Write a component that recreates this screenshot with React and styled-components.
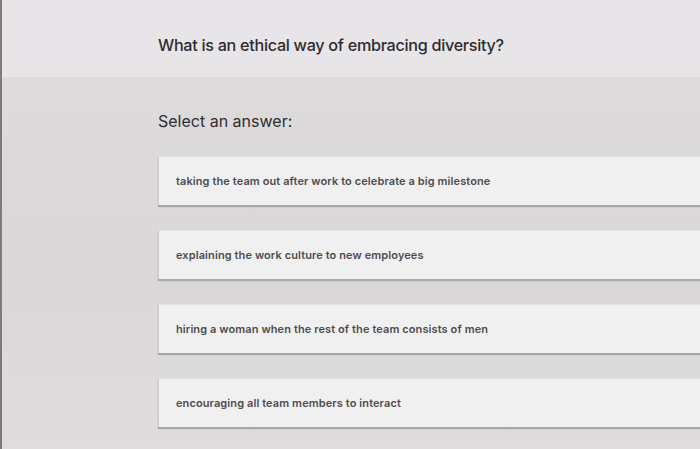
import React from 'react';
import styled, { createGlobalStyle } from 'styled-components';

const GlobalStyle = createGlobalStyle`
  html, body {
    margin: 0;
    padding: 0;
    background: #dcd9da;
  }
  body {
    font-family: Inter, 'Liberation Sans', Arial, sans-serif;
  }
`;

const answers = [
  'taking the team out after work to celebrate a big milestone',
  'explaining the work culture to new employees',
  'hiring a woman when the rest of the team consists of men',
  'encouraging all team members to interact',
];

function App() {
  return (
    <>
      <GlobalStyle />
      <Page>
        <QuestionBar>
          <Question>What is an ethical way of embracing diversity?</Question>
        </QuestionBar>
        <AnswerArea>
          <Prompt>Select an answer:</Prompt>
          <Options>
            {answers.map((a) => (
              <Option key={a}>{a}</Option>
            ))}
          </Options>
        </AnswerArea>
      </Page>
    </>
  );
}

export default App;

const Page = styled.div`
  width: 700px;
  height: 449px;
  overflow: hidden;
  border-left: 2px solid #7d7a7c;
  box-sizing: border-box;
  background: linear-gradient(180deg, #dfdcdd 0%, #dad7d8 60%, #dedcdc 100%);
`;

const QuestionBar = styled.div`
  height: 78px;
  box-sizing: border-box;
  padding: 35px 0 0 156px;
  background: #e8e5e9;
  border-bottom: 1px solid #dedbde;
`;

const Question = styled.div`
  font-size: 16.2px;
  font-weight: 500;
  color: #2e2c2f;
  letter-spacing: -0.3px;
`;

const AnswerArea = styled.div`
  padding: 33px 0 0 156px;
`;

const Prompt = styled.div`
  font-size: 16px;
  color: #2f2d30;
  margin-bottom: 25px;
`;

const Options = styled.div`
  display: flex;
  flex-direction: column;
  gap: 25px;
`;

const Option = styled.div`
  height: 48px;
  display: flex;
  align-items: center;
  padding-left: 17px;
  background: #f1f0f1;
  border-top: 1px solid #e4e2e4;
  border-left: 1px solid #cfcccf;
  box-shadow: 0 2px 1px #a9a6a8;
  font-size: 11px;
  font-weight: 600;
  color: #4e4c4f;
  letter-spacing: 0.1px;
`;
